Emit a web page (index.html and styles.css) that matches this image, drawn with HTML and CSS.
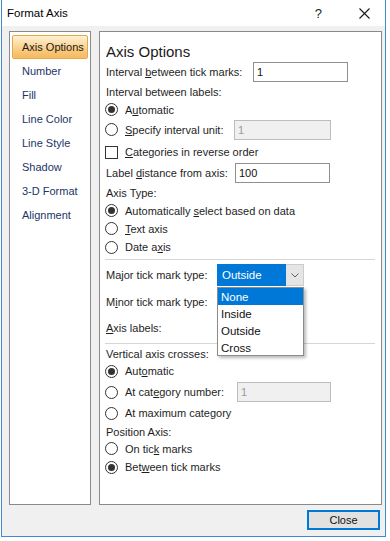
FILE: index.html
```html
<!DOCTYPE html>
<html>
<head>
<meta charset="utf-8">
<link rel="stylesheet" href="styles.css">
</head>
<body>
<div class="window">
  <div class="titlebar">
    <span class="title">Format Axis</span>
    <span class="help">?</span>
    <span class="close-x"><svg width="11" height="11" viewBox="0 0 11 11"><path d="M0.5 0.5 L10.5 10.5 M10.5 0.5 L0.5 10.5" stroke="#1a1a1a" stroke-width="1.1" fill="none"/></svg></span>
  </div>
  <div class="main">
    <div class="nav">
      <div class="nav-item active">Axis Options</div>
      <div class="nav-item">Number</div>
      <div class="nav-item">Fill</div>
      <div class="nav-item">Line Color</div>
      <div class="nav-item">Line Style</div>
      <div class="nav-item">Shadow</div>
      <div class="nav-item">3-D Format</div>
      <div class="nav-item">Alignment</div>
    </div>
    <div class="content">
      <div class="heading">Axis Options</div>
      <div class="row h20"><span class="lbl w147">Interval <u>b</u>etween tick marks:</span><span class="input w95">1</span></div>
      <div class="row h19"><span class="lbl">Interval between labels:</span></div>
      <div class="row h17 opt"><span class="radio on"></span><span class="lbl">A<u>u</u>tomatic</span></div>
      <div class="row h23 opt"><span class="radio"></span><span class="lbl w109"><u>S</u>pecify interval unit:</span><span class="input disabled w97">1</span></div>
      <div class="row h22 opt"><span class="check"></span><span class="lbl"><u>C</u>ategories in reverse order</span></div>
      <div class="row h20"><span class="lbl w129">Label <u>d</u>istance from axis:</span><span class="input w95">100</span></div>
      <div class="row h19"><span class="lbl">Axis Type:</span></div>
      <div class="row h17 opt"><span class="radio on"></span><span class="lbl">Automatically <u>s</u>elect based on data</span></div>
      <div class="row h19 opt"><span class="radio"></span><span class="lbl"><u>T</u>ext axis</span></div>
      <div class="row h18 opt"><span class="radio"></span><span class="lbl">Date a<u>x</u>is</span></div>
      <div class="sep"></div>
      <div class="row h22"><span class="lbl w111">Ma<u>j</u>or tick mark type:</span>
        <div class="select">
          <span class="sel-val">Outside</span>
          <span class="sel-btn"><svg width="8" height="5" viewBox="0 0 8 5"><path d="M0.5 0.5 L4 4 L7.5 0.5" stroke="#606060" stroke-width="1" fill="none"/></svg></span>
          <div class="list">
            <div class="list-item sel">None</div>
            <div class="list-item">Inside</div>
            <div class="list-item">Outside</div>
            <div class="list-item">Cross</div>
          </div>
        </div>
      </div>
      <div class="row h32"><span class="lbl">M<u>i</u>nor tick mark type:</span></div>
      <div class="row h20"><span class="lbl"><u>A</u>xis labels:</span></div>
      <div class="sep2"></div>
      <div class="row h16"><span class="lbl">Vertical axis crosses:</span></div>
      <div class="row h18 opt"><span class="radio on"></span><span class="lbl">Aut<u>o</u>matic</span></div>
      <div class="row h24 opt"><span class="radio"></span><span class="lbl w112">At cat<u>e</u>gory number:</span><span class="input disabled w94">1</span></div>
      <div class="row h18 opt"><span class="radio"></span><span class="lbl">At maximum cate<u>g</u>ory</span></div>
      <div class="row h19"><span class="lbl">Position Axis:</span></div>
      <div class="row h15 opt"><span class="radio"></span><span class="lbl">On tic<u>k</u> marks</span></div>
      <div class="row h22 opt"><span class="radio on"></span><span class="lbl">Bet<u>w</u>een tick marks</span></div>
    </div>
  </div>
  <div class="footer">
    <div class="btn">Close</div>
  </div>
</div>
</body>
</html>
```
FILE: styles.css
```css
html, body {
  margin: 0;
  padding: 0;
  background: #ffffff;
  width: 390px;
  height: 541px;
  overflow: hidden;
  font-family: "Liberation Sans", Arial, sans-serif;
  font-size: 11px;
  color: #1e1e1e;
}

.window {
  box-sizing: border-box;
  margin-left: 1px;
  width: 385px;
  height: 537px;
  border: 1px solid #4189d6;
  border-top: 0;
  background: #f0f0f0;
}

.titlebar {
  height: 26px;
  background: #ffffff;
  display: flex;
  align-items: center;
  position: relative;
}

.title {
  font-size: 11.5px;
  margin-left: 5px;
  color: #000;
}

.help {
  margin-left: auto;
  font-size: 13px;
  color: #222;
  margin-right: 37px;
}

.close-x {
  display: flex;
  margin-right: 15px;
}

.main {
  display: flex;
  gap: 8px;
  padding: 5px 3px 0 7px;
}

.nav {
  box-sizing: border-box;
  width: 82px;
  height: 474px;
  background: #fff;
  border: 1px solid #8a8a8a;
  padding: 3px 2px;
}

.nav-item {
  height: 24px;
  display: flex;
  align-items: center;
  padding-left: 10px;
  color: #1c3566;
  box-sizing: border-box;
}

.nav-item.active {
  height: 24px;
  color: #1a1a1a;
  border: 1px solid #e3a649;
  border-radius: 2px;
  padding-left: 9px;
  background: linear-gradient(#fff0d2 0%, #fcdca6 35%, #f9c77a 70%, #f7b75a 100%);
  box-shadow: inset 0 0 1px #fff;
}

.content {
  box-sizing: border-box;
  width: 283px;
  height: 474px;
  background: #fff;
  border: 1px solid #8a8a8a;
  padding: 8px 6px 0 6px;
}

.heading {
  height: 22px;
  display: flex;
  align-items: center;
  font-size: 15px;
  color: #1a1a1a;
}

.row {
  display: flex;
  align-items: center;
}

.row.opt {
  margin-left: -1px;
}

.h15 { height: 15px; }
.h16 { height: 16px; }
.h17 { height: 17px; }
.h18 { height: 18px; }
.h19 { height: 19px; }
.h20 { height: 20px; }
.h22 { height: 22px; }
.h23 { height: 23px; }
.h24 { height: 24px; }
.h32 { height: 32px; }

.lbl {
  white-space: nowrap;
  flex: none;
}

.w147 { width: 147px; }
.w109 { width: 109px; }
.w129 { width: 129px; }
.w111 { width: 111px; }
.w112 { width: 112px; }

.input {
  box-sizing: border-box;
  height: 20px;
  border: 1px solid #8f8f8f;
  background: #fff;
  padding-left: 3px;
  display: flex;
  align-items: center;
  color: #111;
}

.input.disabled {
  border-color: #bdbdbd;
  background: #f0f0f0;
  color: #9a9a9a;
}

.w94 { width: 94px; }
.w95 { width: 95px; }
.w97 { width: 97px; }

.radio {
  box-sizing: border-box;
  width: 13px;
  height: 13px;
  border: 1px solid #333;
  border-radius: 50%;
  background: #fff;
  margin-right: 7px;
  display: flex;
  align-items: center;
  justify-content: center;
  flex: none;
}

.radio.on::after {
  content: "";
  width: 7px;
  height: 7px;
  border-radius: 50%;
  background: #333;
}

.check {
  box-sizing: border-box;
  width: 13px;
  height: 13px;
  border: 1px solid #333;
  background: #fff;
  margin-right: 7px;
  flex: none;
}

.sep {
  height: 8px;
  box-sizing: border-box;
  padding-top: 3px;
}
.sep::before, .sep2::before {
  content: "";
  display: block;
  height: 1px;
  background: #d6d6d6;
  margin-left: -1px;
}

.sep2 {
  height: 8px;
  box-sizing: border-box;
  padding-top: 5px;
}

.select {
  position: relative;
  width: 87px;
  height: 22px;
  display: flex;
}

.sel-val {
  width: 69px;
  height: 22px;
  background: #0078d7;
  color: #fff;
  display: flex;
  align-items: center;
  padding-left: 5px;
  box-sizing: border-box;
  font-size: 11.5px;
}

.sel-btn {
  box-sizing: border-box;
  width: 18px;
  height: 22px;
  background: #e5e5e5;
  border: 1px solid #cccccc;
  border-left: 0;
  display: flex;
  align-items: center;
  justify-content: center;
}

.list {
  position: absolute;
  top: 23px;
  left: 0;
  box-sizing: border-box;
  width: 87px;
  height: 69px;
  background: #fff;
  border: 1px solid #8c8c8c;
  box-shadow: 2px 2px 3px rgba(0, 0, 0, 0.28);
  z-index: 2;
}

.list-item {
  height: 17px;
  display: flex;
  align-items: center;
  padding-left: 3px;
  font-size: 11.5px;
  color: #111;
}

.list-item.sel {
  background: #0078d7;
  color: #fff;
}

.footer {
  display: flex;
  justify-content: flex-end;
  padding: 5px 5px 0 0;
}

.btn {
  box-sizing: border-box;
  width: 73px;
  height: 20px;
  border: 2px solid #0078d7;
  background: #e1e1e1;
  display: flex;
  align-items: center;
  justify-content: center;
  color: #111;
}
```
